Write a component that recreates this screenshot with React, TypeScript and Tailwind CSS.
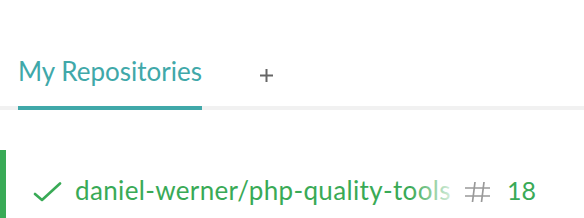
import React from "react";

export default function App() {
  return (
    <div className="w-[584px] h-[218px] bg-white overflow-hidden" style={{ fontFamily: '"Source Sans Pro", Lato, "Liberation Sans", sans-serif' }}>
      <div className="pt-[55px]">
        <div className="flex items-start pl-[18px] border-b-4 border-[#f1f1f1]">
          <div className="-mb-1 border-b-4 border-[#40a8a9] text-[26px] leading-[32px] pb-[19px] text-[#40a8a9] w-[184px] whitespace-nowrap">
            My Repositories
          </div>
          <svg className="ml-[57px] mt-[13px]" width="15" height="15" viewBox="0 0 15 15">
            <path d="M7.5 1 V14 M1 7.5 H14" stroke="#666" strokeWidth="2" />
          </svg>
        </div>
      </div>
      <div className="mt-10 border-l-[6px] border-[#39aa56] h-[80px] flex items-start pt-[24px]">
        <svg className="ml-[27px] mt-[8px]" width="30" height="20" viewBox="0 0 30 20" fill="none">
          <path d="M2 12 L9 18 L27 1.5" stroke="#39aa56" strokeWidth="2.6" strokeLinecap="round" strokeLinejoin="round" />
        </svg>
        <div className="relative ml-[12px] w-[379px] overflow-hidden whitespace-nowrap text-[26px] leading-[32px] tracking-[0.35px] text-[#39aa56]">
          daniel-werner/php-quality-tools
          <div className="absolute right-0 top-0 h-full w-[44px] bg-gradient-to-r from-transparent to-white/85" />
        </div>
        <svg className="ml-[10px] mt-[7px]" width="27" height="22" viewBox="0 0 27 22" fill="none">
          <path d="M11 1 L8.5 21 M20 1 L17.5 21 M1 7 H26 M1 15 H26" stroke="#999" strokeWidth="1.7" />
        </svg>
        <div className="ml-[16px] text-[25px] leading-[32px] text-[#39aa56]">18</div>
      </div>
    </div>
  );
}
